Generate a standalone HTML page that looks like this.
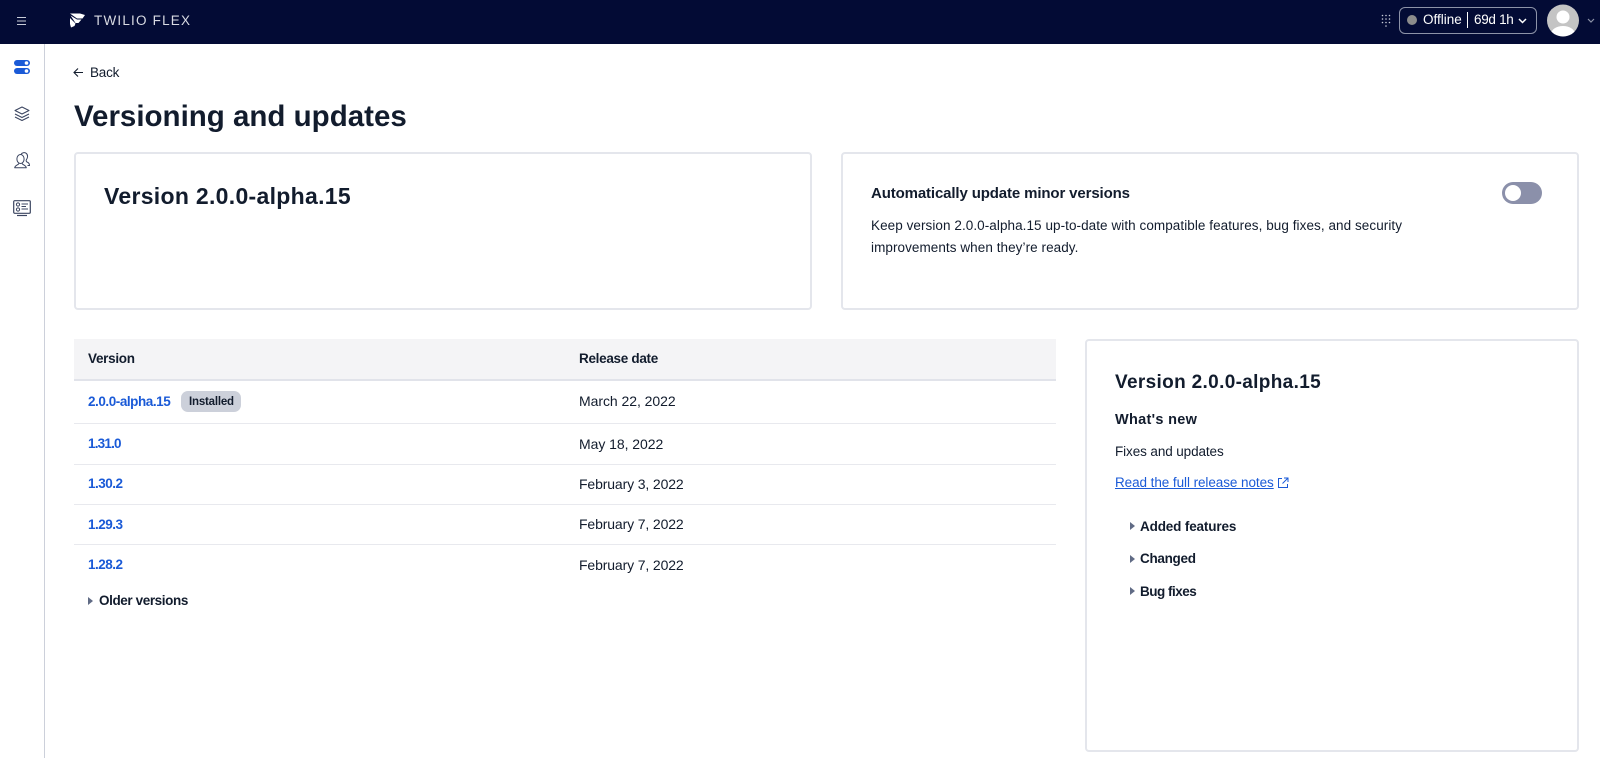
<!DOCTYPE html>
<html><head><meta charset="utf-8"><title>Twilio Flex</title>
<style>
html,body{margin:0;padding:0;background:#fff}
body{width:1600px;height:758px;overflow:hidden;position:relative;font-family:"Liberation Sans",sans-serif;color:#121c2d}
.a{position:absolute;white-space:nowrap;line-height:1}
.b{position:absolute;box-sizing:border-box;border:2px solid #e4e6ec;border-radius:4px;background:#fff}
.l{position:absolute;left:74px;width:982px;height:1px;background:#e8e9ee}
.t{font-size:14px;letter-spacing:-.05px}
.bd{font-weight:bold;font-size:13.500px;letter-spacing:-.3px}
.lk{color:#1a5ad7;font-weight:bold;font-size:13.500px;letter-spacing:-.5px}
.tri{position:absolute;width:0;height:0;border-left:5px solid #606b85;border-top:4px solid transparent;border-bottom:4px solid transparent}
</style></head><body>
<div class="a" style="left:0;top:0;width:1600px;height:44px;background:#030b35"></div>
<svg class="a" style="left:17px;top:16px" width="10" height="10" viewBox="0 0 10 10"><path d="M0 1.500H9M0 5H9M0 8.500H9" stroke="#c8ccd8" stroke-width="1.100"/></svg>
<svg class="a" style="left:69px;top:13px" width="17" height="16" viewBox="0 0 17 16"><path d="M1 .5H11L16 2L13.500 5.500H8Z M1.500 2.500L8 6.500H12.500L9.500 10H6.500Z M1 5L6.500 10.500L5.500 13L2 14.500L1 11Z" fill="#fff"/></svg>
<div class="a" style="left:94px;top:14px;font-size:13.500px;letter-spacing:1.200px;color:#d9dbe3">TWILIO FLEX</div>
<svg class="a" style="left:1381px;top:14px" width="11" height="13" viewBox="0 0 11 13"><g fill="#c8ccd8"><circle cx="1.500" cy="1.500" r=".8"/><circle cx="5" cy="1.500" r=".8"/><circle cx="8.500" cy="1.500" r=".8"/><circle cx="1.500" cy="5" r=".8"/><circle cx="5" cy="5" r=".8"/><circle cx="8.500" cy="5" r=".8"/><circle cx="1.500" cy="8.500" r=".8"/><circle cx="5" cy="8.500" r=".8"/><circle cx="8.500" cy="8.500" r=".8"/><circle cx="5" cy="12" r=".8"/></g></svg>
<div class="a" style="left:1399px;top:7px;width:138px;height:27px;box-sizing:border-box;border:1px solid #8d93a8;border-radius:6px"></div>
<div class="a" style="left:1407px;top:15px;width:10px;height:10px;border-radius:50%;background:#8c8c8c"></div>
<div class="a" style="left:1423px;top:13px;font-size:13.500px;color:#fff">Offline</div>
<div class="a" style="left:1467px;top:12px;width:1px;height:16px;background:#fff"></div>
<div class="a" style="left:1474px;top:13px;font-size:13.500px;letter-spacing:-.3px;color:#fff">69d 1h</div>
<svg class="a" style="left:1518px;top:18px" width="9" height="6" viewBox="0 0 9 6"><path d="M1 1L4.500 4.500L8 1" fill="none" stroke="#fff" stroke-width="1.500"/></svg>
<svg class="a" style="left:1547px;top:4px" width="32" height="33" viewBox="0 0 32 33"><defs><clipPath id="c"><circle cx="16" cy="16.500" r="16"/></clipPath></defs><circle cx="16" cy="16.500" r="16" fill="#c4c4c4"/><g clip-path="url(#c)" fill="#fff"><circle cx="16" cy="13" r="6.500"/><ellipse cx="16" cy="30" rx="12" ry="8"/></g></svg>
<svg class="a" style="left:1587px;top:18px" width="8" height="6" viewBox="0 0 8 6"><path d="M1 1L4 4L7 1" fill="none" stroke="#8d93a8" stroke-width="1.200"/></svg>

<div class="a" style="left:44px;top:44px;width:1px;height:714px;background:#ccd0da"></div>
<svg class="a" style="left:14px;top:60px" width="16" height="15" viewBox="0 0 16 15"><rect y="0" width="16" height="6" rx="3" fill="#1a5ad7"/><rect y="8" width="16" height="6" rx="3" fill="#1a5ad7"/><circle cx="12.500" cy="3" r="1.800" fill="#fff"/><circle cx="12.500" cy="11" r="1.800" fill="#fff"/></svg>
<svg class="a" style="left:14px;top:106px" width="16" height="16" viewBox="0 0 16 16"><path d="M8 1L15 4.500L8 8L1 4.500ZM1 8L8 11.500L15 8M1 11L8 14.500L15 11" fill="none" stroke="#3b4560" stroke-width="1" stroke-linejoin="round"/></svg>
<svg class="a" style="left:14px;top:152px" width="16" height="17" viewBox="0 0 16 17"><ellipse cx="6.500" cy="7" rx="3.600" ry="4.500" fill="none" stroke="#3b4560"/><path d="M5 11C5 13 1 13 .7 15.800H12.300C12 13 8 13 8 11" fill="none" stroke="#3b4560" stroke-linejoin="round"/><path d="M7 2.500C8 .5 10.500 .3 12 1.200C14 2.500 14 5.500 12.500 7.500C12 8.500 12 9.500 13 10C14.500 10.500 15.500 11.500 15.500 13.500H13.500" fill="none" stroke="#3b4560"/></svg>
<svg class="a" style="left:13px;top:200px" width="18" height="17" viewBox="0 0 18 17"><rect x=".7" y=".7" width="16.600" height="12.600" rx="1" fill="none" stroke="#3b4560" stroke-width="1.200"/><path d="M4 15.500H14" stroke="#3b4560" stroke-width="1.200"/><circle cx="5" cy="4.500" r="1.600" fill="none" stroke="#3b4560"/><circle cx="5" cy="9.500" r="1.600" fill="none" stroke="#3b4560"/><path d="M8.500 4H15M8.500 6.500H13M8.500 9H15" stroke="#3b4560"/></svg>

<svg class="a" style="left:73px;top:67px" width="11" height="11" viewBox="0 0 11 11"><path d="M10 5.500H1M5 1.500L1 5.500L5 9.500" fill="none" stroke="#121c2d" stroke-width="1.100"/></svg>
<div class="a" style="left:90px;top:66px;font-size:13.500px;letter-spacing:-.2px">Back</div>
<div class="a" style="left:74px;top:102px;font-size:29.500px;font-weight:bold;letter-spacing:0">Versioning and updates</div>

<div class="b" style="left:74px;top:152px;width:738px;height:158px"></div>
<div class="a" style="left:104px;top:185px;font-size:23px;font-weight:bold;letter-spacing:.3px">Version 2.0.0-alpha.15</div>

<div class="b" style="left:841px;top:152px;width:738px;height:158px"></div>
<div class="a" style="left:871px;top:186px;font-size:15px;font-weight:bold;letter-spacing:-.13px">Automatically update minor versions</div>
<div class="a" style="left:871px;top:219px;font-size:13.500px;letter-spacing:.065px">Keep version 2.0.0-alpha.15 up-to-date with compatible features, bug fixes, and security</div>
<div class="a" style="left:871px;top:241px;font-size:13.500px;letter-spacing:.065px">improvements when they’re ready.</div>
<div class="a" style="left:1502px;top:182px;width:40px;height:22px;border-radius:11px;background:#8b90aa"></div>
<div class="a" style="left:1505px;top:185px;width:16px;height:16px;border-radius:50%;background:#fff"></div>

<div class="a" style="left:74px;top:339px;width:982px;height:40px;background:#f4f4f6"></div>
<div class="a" style="left:74px;top:379px;width:982px;height:2px;background:#e1e3ea"></div>
<div class="a bd" style="left:88px;top:352px">Version</div>
<div class="a bd" style="left:579px;top:352px">Release date</div>

<div class="a lk" style="left:88px;top:395px;letter-spacing:-.45px">2.0.0-alpha.15</div>
<div class="a" style="left:181px;top:391px;width:60px;height:21px;border-radius:7px;background:#ccd0da"></div>
<div class="a" style="left:189px;top:397px;font-size:11.500px;font-weight:bold;letter-spacing:-.2px">Installed</div>
<div class="a t" style="left:579px;top:394px">March 22, 2022</div>
<div class="l" style="top:423px"></div>
<div class="a lk" style="left:88px;top:437px;letter-spacing:-.8px">1.31.0</div>
<div class="a t" style="left:579px;top:437px">May 18, 2022</div>
<div class="l" style="top:464px"></div>
<div class="a lk" style="left:88px;top:477px">1.30.2</div>
<div class="a t" style="left:579px;top:477px;letter-spacing:-.13px">February 3, 2022</div>
<div class="l" style="top:504px"></div>
<div class="a lk" style="left:88px;top:518px">1.29.3</div>
<div class="a t" style="left:579px;top:517px;letter-spacing:-.13px">February 7, 2022</div>
<div class="l" style="top:544px"></div>
<div class="a lk" style="left:88px;top:558px">1.28.2</div>
<div class="a t" style="left:579px;top:558px;letter-spacing:-.13px">February 7, 2022</div>
<div class="tri" style="left:88px;top:597px"></div>
<div class="a bd" style="left:99px;top:594px;letter-spacing:-.4px">Older versions</div>

<div class="b" style="left:1085px;top:339px;width:494px;height:413px"></div>
<div class="a" style="left:1115px;top:373px;font-size:19px;font-weight:bold;letter-spacing:.34px">Version 2.0.0-alpha.15</div>
<div class="a" style="left:1115px;top:413px;font-size:14.500px;font-weight:bold;letter-spacing:.3px">What's new</div>
<div class="a" style="left:1115px;top:445px;font-size:13.500px;letter-spacing:-.1px">Fixes and updates</div>
<div class="a" style="left:1115px;top:476px;font-size:13.500px;letter-spacing:-.07px;color:#1a5ad7;text-decoration:underline">Read the full release notes</div>
<svg class="a" style="left:1277px;top:477px" width="12" height="12" viewBox="0 0 12 12"><path d="M5 1.500H1.500V10.500H10.500V7M7 1H11V5M11 1L5.500 6.500" fill="none" stroke="#1a5ad7" stroke-width="1"/></svg>
<div class="tri" style="left:1130px;top:522px"></div>
<div class="a bd" style="left:1140px;top:520px;letter-spacing:-.15px">Added features</div>
<div class="tri" style="left:1130px;top:555px"></div>
<div class="a bd" style="left:1140px;top:552px">Changed</div>
<div class="tri" style="left:1130px;top:587px"></div>
<div class="a bd" style="left:1140px;top:585px;letter-spacing:-.5px">Bug fixes</div>
</body></html>
